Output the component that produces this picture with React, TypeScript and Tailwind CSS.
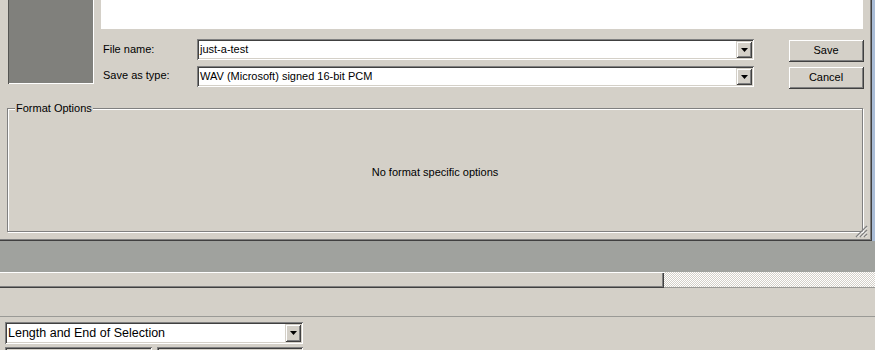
const sunken =
  "shadow-[inset_1px_1px_0_#808080,inset_-1px_-1px_0_#ffffff,inset_2px_2px_0_#404040,inset_-2px_-2px_0_#d4d0c8]";
const raised =
  "shadow-[inset_1px_1px_0_#d4d0c8,inset_-1px_-1px_0_#404040,inset_2px_2px_0_#ffffff,inset_-2px_-2px_0_#808080]";

function ArrowButton({ className = "" }: { className?: string }) {
  return (
    <span className={`flex h-[17px] w-[16px] shrink-0 items-center justify-center bg-[#d4d0c8] ${raised} ${className}`}>
      <svg width="7" height="4" viewBox="0 0 7 4">
        <path d="M0 0h7L3.5 4z" fill="#000" />
      </svg>
    </span>
  );
}

function Combo({ value, className = "" }: { value: string; className?: string }) {
  return (
    <div className={`flex h-[21px] items-center bg-white p-[2px] ${sunken} ${className}`}>
      <span className="flex-1 truncate pl-[1px] text-[11px] leading-none text-black">{value}</span>
      <ArrowButton />
    </div>
  );
}

function PushButton({ label }: { label: string }) {
  return (
    <button
      type="button"
      className={`flex h-[23px] w-[76px] items-center justify-center bg-[#d4d0c8] text-[11px] text-black ${raised}`}
    >
      {label}
    </button>
  );
}

function ResizeGrip() {
  return (
    <svg width="13" height="13" viewBox="0 0 13 13" className="absolute bottom-[3px] right-[4px]">
      <path d="M12 1L1 12M12 5L5 12M12 9L9 12" stroke="#808080" strokeWidth="1.4" />
      <path d="M12 2.5L2.5 12M12 6.5L6.5 12M12 10.5L10.5 12" stroke="#ffffff" strokeWidth="0.8" />
    </svg>
  );
}

function SaveDialog() {
  return (
    <div className="relative h-[241px] w-[872px] shrink-0 bg-[#d4d0c8] shadow-[inset_-1px_-1px_0_#404040,inset_-2px_-2px_0_#808080]">
      <div className="flex items-start">
        <div className="ml-[8px] h-[84px] w-[86px] shrink-0 bg-[#80807c] shadow-[inset_1px_0_0_#555552,inset_-1px_-1px_0_#ffffff]" />
        <div className="ml-[7px] flex flex-col">
          <div className="h-[29px] w-[762px] bg-white" />
          <div className="mt-[10px] flex items-start">
            <span className="w-[96px] pl-[2px] pt-[4px] text-[11px] leading-[13px] text-black">File name:</span>
            <Combo value="just-a-test" className="w-[557px]" />
            <div className="ml-[34px]">
              <PushButton label="Save" />
            </div>
          </div>
          <div className="mt-[4px] flex items-start">
            <span className="w-[96px] pl-[2px] pt-[3px] text-[11px] leading-[13px] text-black">Save as type:</span>
            <Combo value="WAV (Microsoft) signed 16-bit PCM" className="w-[557px]" />
            <div className="ml-[34px]">
              <PushButton label="Cancel" />
            </div>
          </div>
        </div>
      </div>
      <div className="relative ml-[7px] mt-[19px] flex h-[124px] w-[856px] items-center justify-center border border-[#808080] shadow-[1px_1px_0_#ffffff,inset_1px_1px_0_#ffffff]">
        <span className="absolute -top-[7px] left-[7px] bg-[#d4d0c8] px-[1px] text-[11px] leading-[13px] text-black">
          Format Options
        </span>
        <span className="pt-[4px] text-[11px] text-black">No format specific options</span>
      </div>
      <ResizeGrip />
    </div>
  );
}

export default function App() {
  return (
    <div className="flex h-[350px] w-[875px] flex-col overflow-hidden bg-[#d4d0c8] font-['Liberation_Sans',Arial,sans-serif]">
      <div className="flex shrink-0">
        <SaveDialog />
        <div className="h-[241px] flex-1 bg-[#a9bcd6]" />
      </div>
      <div className="h-[31px] shrink-0 bg-[#a0a29e]" />
      <div className="flex h-[16px] shrink-0">
        <div className="h-full w-[664px] bg-[#d4d0c8] shadow-[inset_0_1px_0_#ffffff,inset_-1px_-1px_0_#404040,inset_-2px_-2px_0_#808080]" />
        <div className="h-full flex-1 bg-[repeating-conic-gradient(#d4d0c8_0%_25%,#ffffff_0%_50%)] bg-[length:2px_2px] shadow-[inset_0_-1px_0_#9a9a96]" />
      </div>
      <div className="h-[29px] shrink-0 border-b border-[#9a9a96]" />
      <div className="ml-[5px] mt-[5px] flex h-[22px] w-[298px] shrink-0 items-center bg-white p-[2px] shadow-[inset_1px_1px_0_#808080,inset_-1px_-1px_0_#ffffff,inset_2px_2px_0_#404040,inset_-2px_-2px_0_#d4d0c8]">
        <span className="flex-1 pl-[1px] text-[12.5px] leading-none text-black">Length and End of Selection</span>
        <ArrowButton className="h-[18px]" />
      </div>
      <div className="ml-[5px] mt-[3px] flex shrink-0 gap-[5px]">
        <div className={`flex h-[20px] w-[147px] items-start justify-end bg-[#d4d0c8] p-[2px] ${sunken}`}>
          <ArrowButton />
        </div>
        <div className={`flex h-[20px] w-[146px] items-start justify-end bg-[#d4d0c8] p-[2px] ${sunken}`}>
          <ArrowButton />
        </div>
      </div>
    </div>
  );
}
